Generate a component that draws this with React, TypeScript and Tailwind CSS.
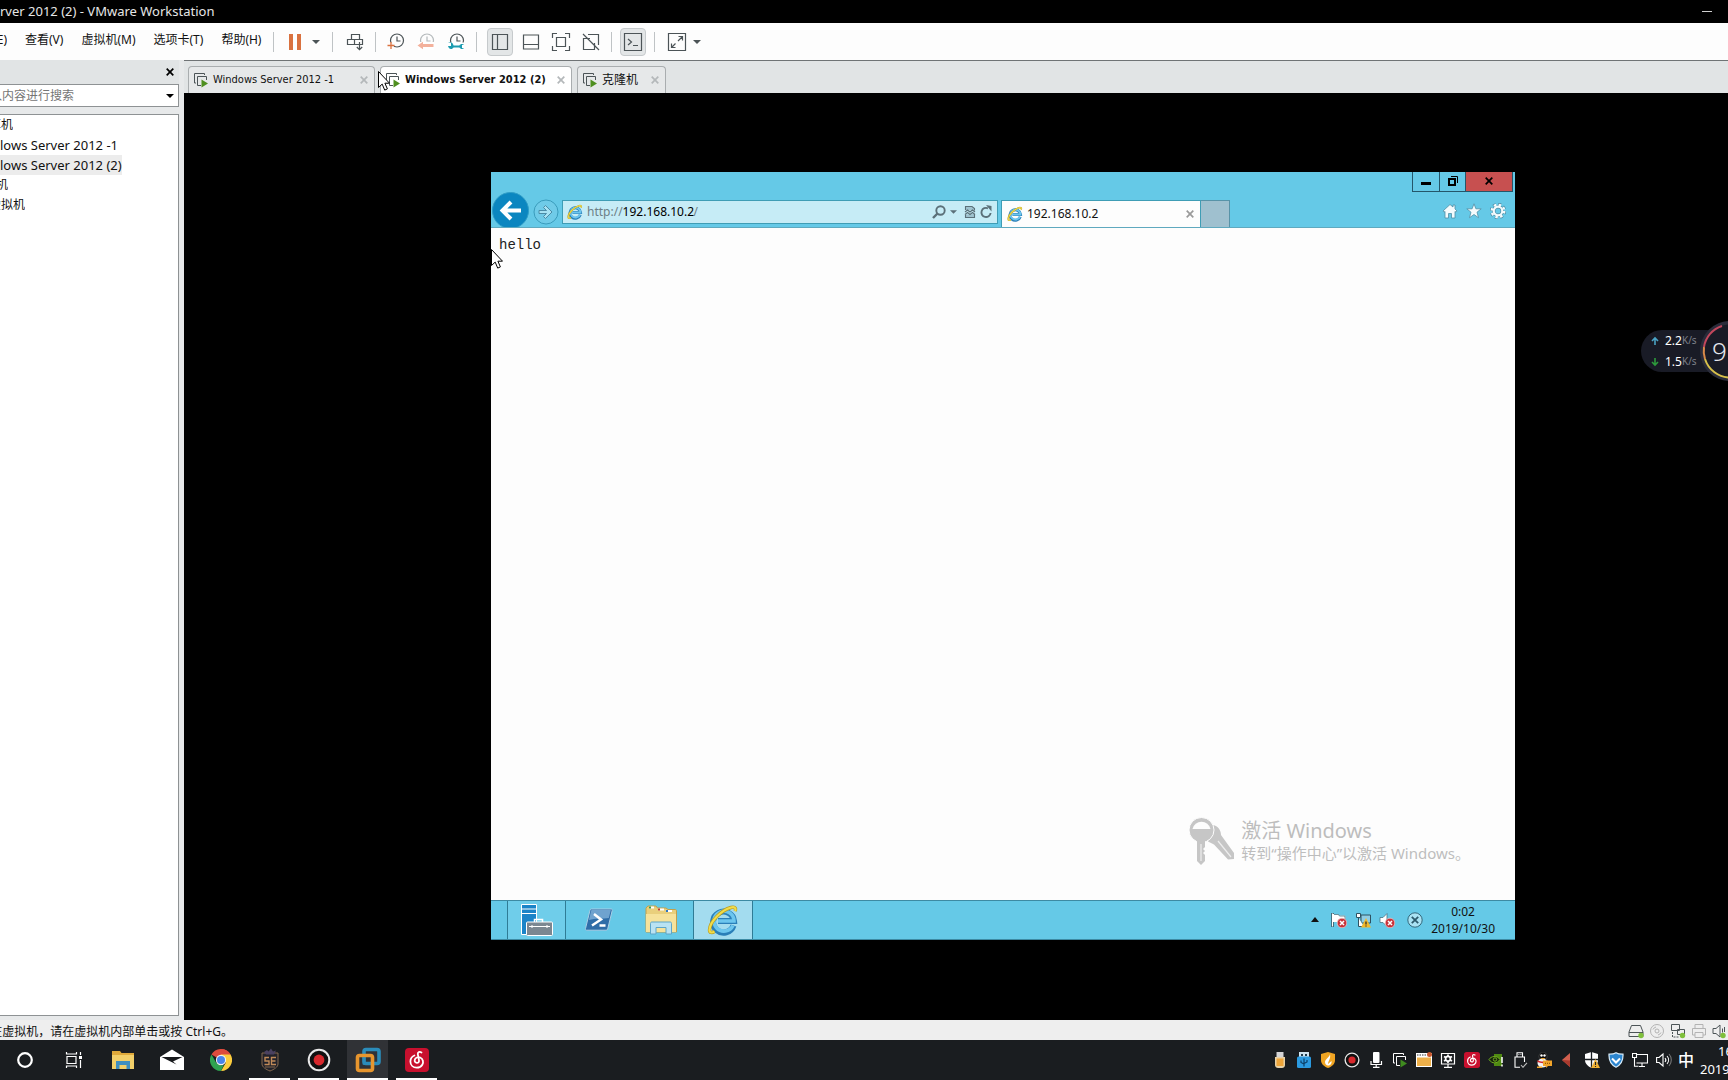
import type { ReactNode } from "react";

type IconProps = { className?: string };

const INK = "#4c5457";

function Glyph({ className = "size-5", box = 20, children }: { className?: string; box?: number; children: ReactNode }) {
  return (
    <svg className={`${className} shrink-0`} viewBox={`0 0 ${box} ${box}`} fill="none" aria-hidden="true">
      {children}
    </svg>
  );
}

/* ---------- Shared drawings ---------- */

function Cursor({ className = "" }: IconProps) {
  return (
    <svg className={className} width="12" height="20" viewBox="0 0 12 20" aria-hidden="true">
      <path d="M.5 .5v16l3.7-3.4 2.5 6 2.7-1.2-2.5-5.7h4.6z" fill="#fff" stroke="#000" />
    </svg>
  );
}

function Caret({ className = "" }: IconProps) {
  return (
    <svg className={`shrink-0 ${className}`} width="8" height="4" viewBox="0 0 8 4" aria-hidden="true">
      <path d="M0 0h8L4 4z" fill="currentColor" />
    </svg>
  );
}

function Cross({ className = "" }: IconProps) {
  return (
    <svg className={`shrink-0 ${className}`} width="8" height="8" viewBox="0 0 8 8" aria-hidden="true">
      <path d="M.7 .7l6.6 6.6M7.3 .7L.7 7.3" stroke="currentColor" strokeWidth="1.7" />
    </svg>
  );
}

function VmIcon({ className = "size-4", line = INK, play = "#4f8f1f" }: IconProps & { line?: string; play?: string }) {
  return (
    <Glyph className={className} box={16}>
      <path d="M3 11H1.5V1.5h10V3" stroke={line} />
      <path d="M8 13.5H4.500V4.500h9V8" stroke={line} />
      <path d="M8.500 7.500l6.500 4-6.500 4z" fill={play} />
    </Glyph>
  );
}

function IeIcon({ className = "size-4" }: IconProps) {
  return (
    <Glyph className={className} box={32}>
      <path d="M26.500 21.500A10.500 10.500 0 1 1 27 17H11" stroke="#2a7fb8" strokeWidth="6" />
      <path d="M26 21.500A10 10 0 1 1 27 17H11" stroke="#6cc6ee" strokeWidth="3.600" />
      <path d="M28 7c1.500-3-.5-4.500-4-3.500C15 6 3 17 2.500 26c0 3 2.500 3 5 1.500" stroke="#b99c1e" strokeWidth="3.400" />
      <path d="M28 7c1.500-3-.5-4.500-4-3.500C15 6 3 17 2.500 26c0 3 2.500 3 5 1.500" stroke="#f0dc4a" strokeWidth="2.200" />
    </Glyph>
  );
}

function NeteaseIcon({ className = "size-6" }: IconProps) {
  return (
    <Glyph className={className} box={24}>
      <rect width="24" height="24" rx="4" fill="#c8102e" />
      <path
        d="M16.500 4.500c-2-1.200-4-.4-3.700 1.600l1.200 6.200c.3 1.900-1 2.700-2.200 2.600-1.400-.1-2.300-1.300-2.100-2.800.4-2.600 3.400-3.500 5.400-2.600 3 1.400 3.700 4.600 2.200 7.200-1.300 2.300-3.400 3-5.600 3-3.600 0-6.300-2.600-6.300-6.200 0-2.900 1.600-5 4-6"
        stroke="#fff"
        strokeWidth="1.800"
        strokeLinecap="round"
      />
    </Glyph>
  );
}

function RecordIcon({ className = "size-6" }: IconProps) {
  return (
    <Glyph className={className} box={24}>
      <circle cx="12" cy="12" r="10.300" fill="#111" stroke="#e8e8e8" strokeWidth="2" />
      <circle cx="12" cy="12" r="5.400" fill="#d8282c" />
    </Glyph>
  );
}

/* ---------- VMware toolbar ---------- */

function ToolButton({ label, className, children }: { label: string; className: string; children: ReactNode }) {
  return (
    <button type="button" aria-label={label} className={`flex shrink-0 items-center justify-center ${className}`}>
      {children}
    </button>
  );
}

function Divider({ className = "" }: IconProps) {
  return <span className={`h-5 w-px shrink-0 bg-[#bfc3c5] ${className}`} />;
}

function ClockFace({ tone = INK }: { tone?: string }) {
  return (
    <>
      <circle cx="11" cy="8.500" r="6.500" stroke={tone} strokeWidth="1.200" />
      <path d="M11 4.500v4.500h3.500" stroke={tone} strokeWidth="1.200" />
    </>
  );
}

function Toolbar() {
  return (
    <div className="flex items-center">
      <Divider />
      <ToolButton label="暂停" className="ml-3 w-5">
        <Glyph box={20}>
          <path d="M3 2h4v16H3zM11 2h4v16h-4z" fill="#d9713f" />
        </Glyph>
      </ToolButton>
      <ToolButton label="电源选项" className="ml-1 w-3">
        <Caret className="text-[#4c5457]" />
      </ToolButton>
      <Divider className="ml-2.5" />
      <ToolButton label="发送 Ctrl+Alt+Del" className="ml-3 w-5">
        <Glyph>
          <path
            d="M6.500 2.500h8v5h-8zM2.500 7.500h7v5h-7zM9.500 7.500h8v5h-8zM14.500 10v7.500M11.800 15l2.700 2.700 2.700-2.700"
            stroke={INK}
            strokeWidth="1.200"
          />
        </Glyph>
      </ToolButton>
      <Divider className="ml-2.5" />
      <ToolButton label="拍摄快照" className="ml-2.5 w-5">
        <Glyph>
          <ClockFace />
          <path d="M5 10.500v6M2 13.500h6" stroke="#fff" strokeWidth="2.600" />
          <path d="M5 10v7M1.500 13.500h7" stroke="#d9713f" strokeWidth="1.300" />
        </Glyph>
      </ToolButton>
      <ToolButton label="恢复快照" className="ml-2.5 w-5">
        <Glyph>
          <ClockFace tone="#b5babc" />
          <path d="M2 10h16v8H2z" fill="#fff" />
          <path d="M1.500 13.500L7 9.800v2.200h10.500v3H7v2.200z" fill="#f3b19c" />
        </Glyph>
      </ToolButton>
      <ToolButton label="管理快照" className="ml-2.5 w-5">
        <Glyph>
          <ClockFace />
          <path d="M2 10.500h16V18H2z" fill="#fff" />
          <path
            d="M2 11h3v3H2c.5 2 1.500 3 3 3 1.200 0 2-.6 2.600-1.500h5.800c.6.900 1.400 1.500 2.600 1.500.8 0 1.500-.4 2-1h-2v-3h2c-.5-.7-1.200-1-2-1-1.200 0-2 .6-2.600 1.400H7.600C7 11.600 6.200 10.500 5 10.500c-1.200 0-2.200.1-3 .5z"
            fill="#1d9cb0"
          />
        </Glyph>
      </ToolButton>
      <Divider className="ml-2.5" />
      <ToolButton label="显示或隐藏库" className="ml-2.5 h-7 w-[26px] rounded-sm border border-[#c6cacc] bg-[#e3e6e7]">
        <Glyph>
          <path d="M2.500 2.500h15v15h-15zM7.500 2.500v15" stroke={INK} strokeWidth="1.200" />
        </Glyph>
      </ToolButton>
      <ToolButton label="缩略图栏" className="ml-1.5 w-6">
        <Glyph>
          <path d="M2.500 3h15v14h-15zM2.500 12.500h15" stroke={INK} strokeWidth="1.200" />
        </Glyph>
      </ToolButton>
      <ToolButton label="全屏模式" className="ml-1.5 w-6">
        <Glyph>
          <path
            d="M5.500 5.500h9v9h-9zM1.500 6V1.500H6M14 1.500h4.500V6M18.500 14v4.500H14M6 18.500H1.500V14"
            stroke={INK}
            strokeWidth="1.200"
          />
        </Glyph>
      </ToolButton>
      <ToolButton label="Unity 模式" className="ml-1.5 w-6">
        <Glyph>
          <path d="M7 2.500h10.500V13M9 6.500H2.500v11h11V11M2 2l16 16" stroke={INK} strokeWidth="1.200" />
        </Glyph>
      </ToolButton>
      <Divider className="ml-2" />
      <ToolButton label="控制台视图" className="ml-2 h-7 w-[26px] rounded-sm border border-[#c6cacc] bg-[#e3e6e7]">
        <Glyph>
          <path d="M1.500 1.500h17v17h-17zM5 7l3.500 3L5 13M10 13.500h5" stroke={INK} strokeWidth="1.200" />
        </Glyph>
      </ToolButton>
      <Divider className="ml-2" />
      <ToolButton label="拉伸客户机" className="ml-3 w-5">
        <Glyph>
          <path
            d="M1.500 1.500h17v17h-17zM5 15l3.500-3.500M11 9l4-4M11.500 4.500h4v4M4.500 11.500v4h4"
            stroke={INK}
            strokeWidth="1.200"
          />
        </Glyph>
      </ToolButton>
      <ToolButton label="拉伸选项" className="ml-1 w-3">
        <Caret className="text-[#4c5457]" />
      </ToolButton>
    </div>
  );
}

/* ---------- Library panel ---------- */

function LibraryPanel() {
  return (
    <aside className="flex w-[184px] shrink-0 flex-col bg-[#e7e9ea] pr-[5px] pb-1">
      <div className="flex h-[24px] shrink-0 items-center justify-end bg-[#e1e4e5] pr-1">
        <button type="button" aria-label="关闭库" className="p-px">
          <Cross className="text-black" />
        </button>
      </div>
      <div className="flex h-[23px] shrink-0 items-center overflow-hidden border-y border-r border-[#8e9294] bg-white pr-0.5">
        <input
          aria-label="搜索"
          placeholder="入内容进行搜索"
          className="-ml-2.5 h-5 w-0 flex-1 bg-transparent text-[12px] placeholder:text-[#757575] outline-none"
        />
        <button type="button" aria-label="搜索选项" className="p-0.5">
          <Caret className="text-black" />
        </button>
      </div>
      <ul className="mt-[7px] flex-1 border-y border-r border-[#8e9294] bg-white text-[12px] leading-5 whitespace-nowrap">
        <li className="flex w-[13px] justify-end overflow-hidden">算机</li>
        <li className="w-fit text-[13px]">lows Server 2012 -1</li>
        <li className="w-fit bg-[#ececec] text-[13px]">lows Server 2012 (2)</li>
        <li className="flex w-2 justify-end overflow-hidden">机</li>
        <li className="flex w-[25px] justify-end overflow-hidden">虚拟机</li>
      </ul>
    </aside>
  );
}

/* ---------- Guest tabs ---------- */

function GuestTab({ label, active = false, className }: { label: string; active?: boolean; className: string }) {
  return (
    <div
      className={`flex h-[27px] items-center rounded-t-sm border border-b-0 border-[#a9adaf] pr-1.5 pl-1 ${
        active ? "bg-white" : "bg-[#e6e8e9]"
      } ${className}`}
    >
      <button type="button" role="tab" aria-selected={active} className="flex flex-1 items-center gap-1 whitespace-nowrap">
        <VmIcon />
        {label}
      </button>
      <button type="button" aria-label={`关闭 ${label}`}>
        <Cross className="text-[#b4b8ba]" />
      </button>
    </div>
  );
}

/* ---------- Guest desktop ---------- */

function BrowserHeader() {
  return (
    <header className="flex h-14 shrink-0 justify-between border-b border-[#5fa9bf] bg-[#65c9e7]">
      <div className="flex items-end">
        <button type="button" aria-label="后退" className="ml-px h-[35px] overflow-hidden">
          <Glyph className="size-[37px]" box={37}>
            <circle cx="18.500" cy="18.500" r="18" fill="#0b86c0" stroke="#2f9cc6" />
            <path d="M29 18.500H11M19 10l-8.500 8.500L19 27" stroke="#fff" strokeWidth="4" />
          </Glyph>
        </button>
        <button type="button" aria-label="前进" className="mb-0.5 ml-1">
          <Glyph className="size-[26px]" box={26}>
            <circle cx="13" cy="13" r="12" fill="#6fcbe8" stroke="#3a9cbc" />
            <path d="M6 11.500h7.500L10.500 8.500l2-2L19 13l-6.500 6.500-2-2 3-3H6z" fill="#a6e2f3" stroke="#4b8ba6" strokeWidth="1" />
          </Glyph>
        </button>
        <div className="mb-[3px] ml-[3px] flex h-6 w-[436px] items-center border border-[#3f9db5] bg-[#c6ecf6] px-1 text-[12px] text-[#6d7f86]">
          <IeIcon />
          <span className="ml-1">http://</span>
          <input aria-label="地址" defaultValue="192.168.10.2" className="w-[71px] bg-transparent text-black outline-none" />
          <span>/</span>
          <span className="flex-1" />
          <button type="button" aria-label="搜索">
            <Glyph className="size-[14px]" box={14}>
              <circle cx="8.500" cy="5.500" r="4.200" stroke="#5b7079" strokeWidth="1.900" />
              <path d="M5.500 8.500L1 13" stroke="#5b7079" strokeWidth="2.400" />
            </Glyph>
          </button>
          <button type="button" aria-label="地址选项" className="ml-1">
            <Caret className="w-[7px] text-[#5b7079]" />
          </button>
          <button type="button" aria-label="兼容性视图" className="ml-1.5">
            <Glyph className="size-[14px]" box={14}>
              <path d="M2.500 5V1.500h6.500l2.500 2V5.500M2.500 9.500v3h9V9" fill="#9fc3cf" stroke="#5b7079" strokeWidth="1.100" />
              <path d="M2 7l2.500-2 2.500 2 2.500-2L12 7M2 9.500l2.500-2 2.500 2 2.500-2L12 9.500" stroke="#5b7079" strokeWidth="1.100" />
            </Glyph>
          </button>
          <button type="button" aria-label="刷新" className="ml-0.5">
            <Glyph className="size-[14px]" box={14}>
              <path d="M9 3.300A4.600 4.600 0 1 0 11.600 8" stroke="#5b7079" strokeWidth="1.900" />
              <path d="M7 0l5.500 1v5.500z" fill="#5b7079" />
            </Glyph>
          </button>
        </div>
        <div className="ml-[3px] flex h-[27px] w-[200px] items-center border border-b-0 border-[#3f9db5] bg-[#fdfdfd] pr-1.5 pl-[5px] text-[12px]">
          <IeIcon />
          <span className="ml-1 flex-1">192.168.10.2</span>
          <button type="button" aria-label="关闭选项卡">
            <Cross className="text-[#9a9a9a]" />
          </button>
        </div>
        <button
          type="button"
          aria-label="新建选项卡"
          className="h-[27px] w-[29px] border border-b-0 border-l-0 border-[#5793a8] bg-[#9fc0cf]"
        />
      </div>
      <div className="flex flex-col items-end justify-between pr-0.5">
        <div className="flex h-5 border border-t-0 border-[#24566a]">
          <button type="button" aria-label="最小化" className="flex w-[27px] items-center justify-center border-r border-[#24566a]">
            <span className="mt-1 h-[3px] w-2.5 bg-black" />
          </button>
          <button type="button" aria-label="还原" className="flex w-[26px] items-center justify-center border-r border-[#24566a]">
            <Glyph className="size-[10px]" box={10}>
              <path d="M1 3h6v6H1z" stroke="#000" strokeWidth="2" />
              <path d="M3 .5h6.500V7" stroke="#000" />
            </Glyph>
          </button>
          <button type="button" aria-label="关闭" className="flex w-[46px] items-center justify-center bg-[#c75050]">
            <Cross className="text-black" />
          </button>
        </div>
        <div className="mb-2 flex gap-2 pr-[7px]">
          <button type="button" aria-label="主页">
            <Glyph className="size-4" box={16}>
              <path
                d="M1 8l7-6.500L11 4V2h2v4l2 2-1 1.200-1-.8V15h-3.500v-4.500h-3V15H3V8.400L2 9.200z"
                fill="#f4fbfd"
                stroke="#4f8fa6"
                strokeWidth=".8"
              />
            </Glyph>
          </button>
          <button type="button" aria-label="收藏夹">
            <Glyph className="size-4" box={16}>
              <path
                d="M8 .8l1.900 5h5.300l-4.200 3.400 1.500 5.500L8 11.500l-4.500 3.200L5 9.200.8 5.800h5.300z"
                fill="#f4fbfd"
                stroke="#4f8fa6"
                strokeWidth=".8"
              />
            </Glyph>
          </button>
          <button type="button" aria-label="工具">
            <Glyph className="size-4" box={16}>
              <circle cx="8" cy="8" r="6.600" stroke="#4f8fa6" strokeWidth="3.200" strokeDasharray="3 2.180" />
              <circle cx="8" cy="8" r="4.300" stroke="#4f8fa6" strokeWidth="3.600" />
              <circle cx="8" cy="8" r="6.200" stroke="#f4fbfd" strokeWidth="2.400" strokeDasharray="2.400 2.470" />
              <circle cx="8" cy="8" r="4.300" stroke="#f4fbfd" strokeWidth="2.200" />
            </Glyph>
          </button>
        </div>
      </div>
    </header>
  );
}

function ActivationNotice() {
  return (
    <div className="flex items-start gap-1.5 pr-[45px] pb-[35px] text-[#bdbdbd]">
      <svg className="shrink-0" width="46" height="48" viewBox="0 0 46 48" aria-hidden="true">
        <path d="M24 8c5 1 8 5 8 10l13 18v6l-6 .5-14-15-6-3z" fill="#c6c6c6" />
        <path d="M29 24l13 16" stroke="#eee" strokeWidth="1.200" />
        <circle cx="12.500" cy="13" r="12.500" fill="#c6c6c6" stroke="#fdfdfd" />
        <path d="M3.500 12a9.200 9.200 0 0 1 18 0z" fill="#fdfdfd" />
        <path d="M8 24h8v6l-2 2 2 2-2 2 2 2v6l-4 4-4-4z" fill="#c6c6c6" />
        <path d="M12 27v17" stroke="#eee" strokeWidth="1.200" />
      </svg>
      <div>
        <p className="text-[20px] leading-7">激活 Windows</p>
        <p className="text-[15px] leading-4">转到“操作中心”以激活 Windows。</p>
      </div>
    </div>
  );
}

function RedBadge() {
  return (
    <>
      <circle cx="11" cy="11" r="4.800" fill="#c8323a" stroke="#f0d0d0" strokeWidth=".7" />
      <path d="M9 9l4 4M13 9l-4 4" stroke="#fff" strokeWidth="1.500" />
    </>
  );
}

function GuestTaskbar() {
  return (
    <footer className="flex h-10 shrink-0 justify-between border-y border-[#3d8aa3] bg-[#65c9e7]">
      <nav className="flex gap-[3px] pl-4">
        <button
          type="button"
          aria-label="服务器管理器"
          className="flex w-[59px] items-center justify-center border-x border-[#2f7c96] bg-[#6fcdea]"
        >
          <Glyph className="size-8" box={32}>
            <path d="M.5 .5h15v30H.5z" fill="#1b84c8" stroke="#fff" />
            <path d="M.5 5h15M.5 9.500h15" stroke="#fff" />
            <path d="M13.500 18v-2.500h8V18" stroke="#fff" strokeWidth="1.500" />
            <rect x="5.500" y="18" width="26" height="13.500" rx="1" fill="#7b8791" stroke="#fff" />
            <path d="M8 22.500h21M11 21v3M26 21v3" stroke="#fff" />
          </Glyph>
        </button>
        <button type="button" aria-label="PowerShell" className="flex w-[59px] items-center justify-center">
          <Glyph className="size-7" box={28}>
            <path
              d="M6.500 3h19.500c1 0 1.500.6 1.200 1.600l-4.500 18.400c-.2.800-.8 1.200-1.600 1.200H1.600c-.9 0-1.400-.6-1.100-1.600L5 4.200C5.200 3.400 5.700 3 6.500 3z"
              fill="#2f6da8"
              stroke="#a9cde4"
            />
            <path d="M6.500 4h19.300l-2 8C18 13 10 12 4 14l2-9z" fill="#6fa3cf" />
            <path d="M9 8l7 5.500L7 19.500M14.500 19.500h6" stroke="#fff" strokeWidth="2.500" />
          </Glyph>
        </button>
        <button type="button" aria-label="文件资源管理器" className="flex w-[59px] items-center justify-center">
          <Glyph className="size-8" box={32}>
            <path d="M1 4l2-2h8l1.500 2H21l2 1.500h7c1 0 1.500.5 1.500 1.500V28H1z" fill="#e9cf7c" stroke="#c1a04b" />
            <path d="M4 3.500h5M13 5.500h6M21 7h6" stroke="#fff" strokeWidth="2" />
            <path d="M4 3.500h2" stroke="#3d9b4b" strokeWidth="2" />
            <path d="M13 5.500h2" stroke="#c23b2f" strokeWidth="2" />
            <path d="M21 7h2" stroke="#2f77c2" strokeWidth="2" />
            <path d="M1 10h30v18H1z" fill="#f6e29b" />
            <path d="M5.500 30V19.500c0-1 .5-1.500 1.500-1.500h18c1 0 1.500.5 1.500 1.500V30H21v-6.500H11V30z" fill="#b9e2f3" stroke="#5ea5c7" />
          </Glyph>
        </button>
        <button
          type="button"
          aria-label="Internet Explorer"
          className="flex w-[60px] items-center justify-center border-x border-[#2f7c96] bg-[#a3dcef]"
        >
          <IeIcon className="size-8" />
        </button>
      </nav>
      <div className="flex items-center pr-5">
        <svg width="8" height="5" viewBox="0 0 8 5" aria-hidden="true">
          <path d="M0 5l4-5 4 5z" fill="#111" />
        </svg>
        <Glyph className="ml-3 size-4" box={16}>
          <path d="M1.500 1v14" stroke="#3c5a66" strokeWidth="2.600" />
          <path d="M1.500 1.500v13M2 2.500h5l1 1.500h6v7H8L7 9.500H2z" fill="#fff" stroke="#fff" strokeWidth="1" />
          <path d="M3 2.500h4.500l1 1.500H14v6" stroke="#4a7484" strokeWidth=".8" />
          <RedBadge />
        </Glyph>
        <Glyph className="ml-2 size-4" box={16}>
          <path d="M6 3h9.500v8H6z" fill="#8fcde3" stroke="#2f5261" />
          <path d="M1.500 1.500h4v4h-4zM3.500 6v8.500H9" fill="#fff" stroke="#2f5261" />
          <path d="M11 6l5 9.500H6z" fill="#f2b92c" />
          <path d="M11 9.500v3M11 13.500v1" stroke="#222" strokeWidth="1.200" />
        </Glyph>
        <Glyph className="ml-2 size-4" box={16}>
          <path d="M1 5.500h3L8 1.500v13l-4-4H1z" fill="#fff" stroke="#4a7484" strokeWidth=".8" />
          <RedBadge />
        </Glyph>
        <Glyph className="ml-3 size-4" box={16}>
          <circle cx="8" cy="8" r="7.200" fill="#a9e2f3" stroke="#34687c" />
          <path d="M4.800 4.800l6.400 6.400M11.200 4.800l-6.400 6.400" stroke="#2c5a6c" strokeWidth="1.800" />
        </Glyph>
        <time className="ml-2 text-center text-[12px] leading-[17px] text-[#111]">
          0:02
          <br />
          2019/10/30
        </time>
      </div>
    </footer>
  );
}

function GuestDesktop() {
  return (
    <section className="relative flex h-[768px] w-[1024px] shrink-0 flex-col bg-[#fdfdfd]">
      <BrowserHeader />
      <main className="flex flex-1 flex-col items-end justify-between">
        <pre className="self-stretch px-2 pt-2 font-['Liberation_Mono',monospace] text-[14px] leading-[18px] text-[#222]">hello</pre>
        <ActivationNotice />
      </main>
      <GuestTaskbar />
      <Cursor className="absolute top-[77px] left-0" />
    </section>
  );
}

/* ---------- Status bar ---------- */

function StatusBar() {
  return (
    <div className="flex h-5 shrink-0 items-center justify-between overflow-hidden bg-[#eeeeee]">
      <p className="flex w-[233px] justify-end overflow-hidden pt-1 text-[12px] whitespace-nowrap">
        在虚拟机，请在虚拟机内部单击或按 Ctrl+G。
      </p>
      <div className="flex gap-[5px] pt-0.5">
        <Glyph className="size-4" box={16}>
          <path d="M1 9l2.500-6.500h9L15 9v4.500H1zM1 9.500h14" stroke={INK} />
          <circle cx="13" cy="12.500" r="2.700" fill="#7fbf3b" />
        </Glyph>
        <Glyph className="size-4" box={16}>
          <circle cx="8" cy="8" r="6.500" stroke="#b3b3b3" />
          <circle cx="8" cy="8" r="2" stroke="#b3b3b3" />
          <path d="M4 6.500A4.500 4.500 0 0 1 7 4M12 9.500A4.500 4.500 0 0 1 9 12" stroke="#b3b3b3" />
        </Glyph>
        <Glyph className="size-4" box={16}>
          <path d="M1.500 1.500h8v6h-8zM7.500 6.500h7v5h-7z" stroke={INK} />
          <path d="M2.500 9v5h7" stroke={INK} strokeDasharray="2 1" />
          <circle cx="12.500" cy="12.500" r="2.700" fill="#7fbf3b" />
        </Glyph>
        <Glyph className="size-4" box={16}>
          <path d="M4 5.500v-4h8v4M4 12H1.500V5.500h13V12H12M4 9.500h8v5H4z" stroke="#b3b3b3" />
        </Glyph>
        <Glyph className="size-4" box={16}>
          <path d="M1 5.500h3L8 2v12l-4-3.500H1zM10.500 5.500v4M12.500 4v5" stroke={INK} />
          <circle cx="11" cy="12.500" r="2.700" fill="#7fbf3b" />
        </Glyph>
      </div>
    </div>
  );
}

/* ---------- Host taskbar ---------- */

const apps: { name: string; state: string; icon: ReactNode }[] = [
  {
    name: "Cortana",
    state: "border-transparent",
    icon: (
      <Glyph className="size-[18px]" box={18}>
        <circle cx="9" cy="9" r="6.800" stroke="#fff" strokeWidth="2.200" />
      </Glyph>
    ),
  },
  {
    name: "任务视图",
    state: "border-transparent",
    icon: (
      <Glyph className="size-[18px]" box={18}>
        <path d="M2 5.500h9v7H2zM1.500 1v2h10V1M1.500 17v-2h10v2M15.500 1v3M15.500 9v8" stroke="#fff" strokeWidth="1.200" />
        <path d="M14 5h3v3h-3z" fill="#fff" />
      </Glyph>
    ),
  },
  {
    name: "文件资源管理器",
    state: "border-transparent",
    icon: (
      <Glyph className="size-[22px]" box={22}>
        <path d="M0 2h8l1.500 2H22v16H0z" fill="#dfa93a" />
        <path d="M0 6h22v14H0z" fill="#f2cf69" />
        <path d="M4 20v-8h14v8h-3.500v-4h-7v4z" fill="#3f8fc0" />
      </Glyph>
    ),
  },
  {
    name: "邮件",
    state: "border-transparent",
    icon: (
      <Glyph className="size-6" box={24}>
        <path d="M0 9L12 1.500 24 9v13H0z" fill="#fff" />
        <path d="M1.500 9h21L13 13.500l3.500 3z" fill="#17191c" />
      </Glyph>
    ),
  },
  {
    name: "Chrome",
    state: "border-transparent",
    icon: (
      <Glyph className="size-[22px]" box={24}>
        <path d="M12 12L1.600 6A12 12 0 0 1 22.400 6z" fill="#dd4b3e" />
        <path d="M12 12V0a12 12 0 0 1 10.400 6H12z" fill="#dd4b3e" />
        <path d="M12 6h10.400A12 12 0 0 1 12 24l5.200-9z" fill="#fccd3e" />
        <path d="M1.600 6l5.200 9 5.200 3 3-.5L12 24A12 12 0 0 1 1.600 6z" fill="#2fa351" />
        <circle cx="12" cy="12" r="5.600" fill="#f4f4f4" />
        <circle cx="12" cy="12" r="4.400" fill="#4a84ec" />
      </Glyph>
    ),
  },
  {
    name: "SE",
    state: "border-white",
    icon: (
      <Glyph className="size-6" box={24}>
        <path d="M4 5h16v11c0 3-4 5.500-8 7-4-1.500-8-4-8-7z" fill="#22222a" stroke="#84684f" />
        <path d="M6 4l3-2 1.500 1.500L13 .5l2 3 3-1-2 4H8z" fill="#4a4160" />
        <path d="M11 9.500H7V13h4v3.500H6.500M18 9.500h-4.500v7H18M13.500 13h4" stroke="#c08a58" strokeWidth="1.400" />
        <path d="M7 19h10" stroke="#84684f" />
      </Glyph>
    ),
  },
  { name: "录屏", state: "border-white", icon: <RecordIcon className="size-6" /> },
  {
    name: "VMware Workstation",
    state: "border-white bg-[#303236]",
    icon: (
      <Glyph className="size-[26px]" box={26}>
        <rect x="9" y="2.500" width="15" height="14" rx="2" stroke="#2b8cba" strokeWidth="3.600" />
        <rect x="2.500" y="8.500" width="15" height="15" rx="2" stroke="#e8962e" strokeWidth="3.600" />
        <path d="M9 10.500v6h6" stroke="#2b8cba" strokeWidth="2.600" />
      </Glyph>
    ),
  },
  { name: "网易云音乐", state: "border-white", icon: <NeteaseIcon /> },
];

const tray: { name: string; icon: ReactNode }[] = [
  {
    name: "U盘",
    icon: (
      <Glyph className="size-4" box={16}>
        <path d="M4.500 0h7v5h-7z" fill="#d5d5d5" />
        <path d="M3 5h10v8c0 2-1.500 3-3 3H6c-1.500 0-3-1-3-3z" fill="#e8d2a8" />
        <path d="M4.500 6.500h7V14h-7z" fill="#eea53a" />
      </Glyph>
    ),
  },
  {
    name: "USB 助手",
    icon: (
      <Glyph className="size-4" box={16}>
        <path d="M3 0h10v6H3z" fill="#cfe3ee" />
        <path d="M5 2h2v2H5zM9 2h2v2H9z" fill="#1f3a4a" />
        <rect x="1" y="4.500" width="14" height="11.500" rx="1.500" fill="#2b9ae0" />
        <path d="M8 6.500v8M5 8.500v2l3 1.500M11 8v2l-3 1.500" stroke="#0d3f66" strokeWidth="1.200" />
      </Glyph>
    ),
  },
  {
    name: "火绒",
    icon: (
      <Glyph className="size-4" box={16}>
        <path d="M8 0l7 2v6c0 4-3 6.500-7 8-4-1.500-7-4-7-8V2z" fill="#f0a523" />
        <path d="M10 2c0 3-5 5-5 8 0 2 1.500 3.500 3 3.500 2.500 0 4-2 3.500-4.500L8 12c0-3 3-5 2-10z" fill="#fff" />
      </Glyph>
    ),
  },
  { name: "录屏", icon: <RecordIcon className="size-4" /> },
  {
    name: "麦克风",
    icon: (
      <Glyph className="size-4" box={16}>
        <rect x="5" y="0" width="6.500" height="11" rx="1" fill="#fff" />
        <path d="M3 9v3.500h10.500V9M8.200 12.500V15M5 15.300h6.500" stroke="#fff" strokeWidth="1.200" />
      </Glyph>
    ),
  },
  { name: "VMware", icon: <VmIcon line="#fff" play="#3f8b1f" /> },
  {
    name: "窗口",
    icon: (
      <Glyph className="size-4" box={16}>
        <path d="M0 1h16v14H0z" fill="#fff" />
        <path d="M1 5.500h14V14H1z" fill="#eeb04a" />
        <path d="M1 3h9" stroke="#333" strokeDasharray="1.500 1" />
        <circle cx="13.500" cy="2.500" r="2.500" fill="#c9582e" />
      </Glyph>
    ),
  },
  {
    name: "显示设置",
    icon: (
      <Glyph className="size-4" box={16}>
        <path d="M1.500 1.500h13v10.500h-13zM8 12v3M4 15.300h8" stroke="#fff" strokeWidth="1.200" />
        <circle cx="8" cy="6.800" r="2.400" stroke="#fff" strokeWidth="1.700" />
        <path d="M8 2.500v2M8 9v2M4 4.500l1.800 1M10.200 8l1.800 1M12 4.500l-1.800 1M5.800 8L4 9" stroke="#fff" strokeWidth="1.700" />
      </Glyph>
    ),
  },
  { name: "网易云音乐", icon: <NeteaseIcon className="size-4" /> },
  {
    name: "NVIDIA",
    icon: (
      <Glyph className="size-4" box={16}>
        <path d="M6 2h8v12H6z" fill="#4f8a12" />
        <path d="M1 7.500C3 4 9 3 12 7.500 9 12 4 12 1 7.500z" fill="#16240c" stroke="#72b01e" />
        <circle cx="7" cy="7.500" r="1.700" stroke="#72b01e" />
        <path d="M14 5v6M14 12.500v2" stroke="#fff" strokeWidth="1.500" />
      </Glyph>
    ),
  },
  {
    name: "安全删除硬件",
    icon: (
      <Glyph className="size-4" box={16}>
        <path d="M5 5V.7h5.500V5M8 15.300H3V5h9.500v5M6.500 2.500h.8M8.500 2.500h.8" stroke="#fff" strokeWidth="1.100" />
        <path d="M9 13l2 2.300 4-4.500" stroke="#bbb" strokeWidth="1.100" />
      </Glyph>
    ),
  },
  {
    name: "QQ",
    icon: (
      <Glyph className="size-4" box={16}>
        <ellipse cx="7" cy="4.500" rx="4" ry="4.500" fill="#0a0a0a" stroke="#666" strokeWidth=".5" />
        <ellipse cx="6.500" cy="11" rx="5" ry="4.500" fill="#f2f2f2" />
        <path d="M1.500 8c3 2 8 2 10.500 0v2c-3 1.500-7.500 1.500-10.500 0z" fill="#d5282a" />
        <circle cx="5.500" cy="3.500" r="1.200" fill="#fff" />
        <circle cx="8.500" cy="3.500" r="1.200" fill="#fff" />
        <path d="M4 6h6l-3 1.500zM1 14.500h5V16H1z" fill="#f3a52a" />
        <path d="M7 8.500h9V14h-4l-2 2v-2H7z" fill="#f3a52a" />
        <path d="M9 11.300h5" stroke="#7b4a05" strokeDasharray="1 1" />
      </Glyph>
    ),
  },
  {
    name: "音频",
    icon: (
      <Glyph className="size-4" box={16}>
        <path d="M2 8l8-7v14z" fill="#d2604f" />
        <path d="M2 8l8 .5V15z" fill="#a83a2e" />
      </Glyph>
    ),
  },
  {
    name: "Windows 安全",
    icon: (
      <Glyph className="size-4" box={16}>
        <path d="M7.500 0L14 2v6c0 3.500-2.500 6-6.500 8C3.500 14 1 11.500 1 8V2z" fill="#fff" />
        <path d="M7.500 0v16M1 7.500h13" stroke="#1a1f23" strokeWidth="1.300" />
        <path d="M11.500 7l4.500 9H7z" fill="#efb034" />
        <path d="M11.500 10v3M11.500 14v1" stroke="#222" strokeWidth="1.100" />
      </Glyph>
    ),
  },
  {
    name: "电脑管家",
    icon: (
      <Glyph className="size-4" box={16}>
        <path
          d="M8 .8C10 2 12.500 2.300 15 2.200c.3 6-1.500 10.500-7 13C2.500 12.700.7 8.200 1 2.200 3.500 2.300 6 2 8 .8z"
          fill="#2c86d0"
          stroke="#d9ecf8"
          strokeWidth="1.200"
        />
        <path d="M4 6.500l4 4 4-4" stroke="#fff" strokeWidth="2" />
      </Glyph>
    ),
  },
  {
    name: "网络",
    icon: (
      <Glyph className="size-4" box={16}>
        <path d="M4.500 2.500h11v8.500h-11M0.500 1.500h4v4h-4zM2.500 5.500v8.800h4M10 11v3M7 14.500h6" stroke="#fff" strokeWidth="1.100" />
      </Glyph>
    ),
  },
  {
    name: "音量",
    icon: (
      <Glyph className="size-4" box={16}>
        <path d="M.6 5.500h2.500L7 2v12l-3.900-3.500H.6z" stroke="#fff" strokeWidth="1.100" />
        <path d="M9 6a3 3 0 0 1 0 4M11 4a6 6 0 0 1 0 8" stroke="#fff" strokeWidth="1.100" />
        <path d="M13 2a9 9 0 0 1 0 12" stroke="#777" strokeWidth="1.100" />
      </Glyph>
    ),
  },
];

function HostTaskbar() {
  return (
    <footer className="flex h-10 shrink-0 justify-between overflow-hidden bg-[#1a1d20] text-white">
      <nav className="flex">
        {apps.map((app) => (
          <button key={app.name} type="button" aria-label={app.name} className="flex w-[49px] justify-center px-1">
            <span className={`flex h-10 flex-1 items-center justify-center border-b-2 pt-0.5 ${app.state}`}>{app.icon}</span>
          </button>
        ))}
      </nav>
      <div className="flex">
        {tray.map((item) => (
          <button key={item.name} type="button" aria-label={item.name} className="flex w-6 items-center justify-center">
            {item.icon}
          </button>
        ))}
        <button type="button" aria-label="输入法" className="w-5 text-[16px] font-medium">
          中
        </button>
        <time className="ml-1 w-7 overflow-hidden pt-0.5 text-[13px] leading-[18px]">
          <span className="block pl-[18px]">16</span>
          <span className="block">2019</span>
        </time>
      </div>
    </footer>
  );
}

/* ---------- Floating network meter ---------- */

function NetMeter() {
  return (
    <div className="absolute top-[321px] right-0 flex h-[60px] w-[87px] items-center overflow-hidden">
      <div className="h-[42px] w-full shrink-0 rounded-l-full bg-[#191b26] pl-2.5 text-[12px] leading-[21px] text-white">
        {[
          { speed: "2.2", tone: "#4aa3c4", arrow: "M4 9V2M1 5l3-3 3 3" },
          { speed: "1.5", tone: "#2d9a3c", arrow: "M4 1v7M1 5l3 3 3-3" },
        ].map((row) => (
          <p key={row.speed} className="flex items-center">
            <svg className="mr-1.5" width="8" height="10" viewBox="0 0 8 10" fill="none" aria-hidden="true">
              <path d={row.arrow} stroke={row.tone} strokeWidth="1.600" />
            </svg>
            {row.speed}
            <span className="text-[10px] text-[#7d808a]">K/s</span>
          </p>
        ))}
      </div>
      <div className="-ml-7 flex size-[60px] shrink-0 items-center rounded-full bg-[#2a2c3a]">
        <svg className="-mr-[60px] size-[60px] shrink-0" viewBox="0 0 60 60" fill="none" aria-hidden="true">
          <circle cx="30" cy="30" r="26.500" fill="#191b26" />
          <path d="M4 26A26.500 26.500 0 0 1 22 5" stroke="#c2475c" strokeWidth="2" />
          <path d="M5 38A26.500 26.500 0 0 1 4 26" stroke="#d98a4a" strokeWidth="2" />
          <path d="M30 56.500A26.500 26.500 0 0 1 5 38" stroke="#d8c04a" strokeWidth="2" />
        </svg>
        <span className="relative pl-3 text-[26px] font-light text-[#e4e6ec]">9</span>
      </div>
    </div>
  );
}

export default function App() {
  return (
    <div className="relative flex h-screen flex-col overflow-hidden bg-black font-['Noto_Sans','Noto_Sans_CJK_SC',sans-serif] text-[#111]">
      <header className="flex h-[23px] shrink-0 items-center justify-between text-[13px] text-[#e6e6e6]">
        <h1 className="whitespace-nowrap">rver 2012 (2) - VMware Workstation</h1>
        <button type="button" aria-label="最小化" className="flex h-full items-center px-4">
          <span className="h-px w-2.5 bg-[#d0d0d0]" />
        </button>
      </header>

      <div className="flex h-[37px] shrink-0 items-center overflow-hidden bg-[#fdfdfd]">
        <nav className="flex w-[273px] shrink-0 gap-[18px] pb-[3px] text-[12px] whitespace-nowrap">
          <button type="button" className="flex w-[7px] justify-end overflow-hidden">
            E)
          </button>
          <button type="button">查看(V)</button>
          <button type="button">虚拟机(M)</button>
          <button type="button">选项卡(T)</button>
          <button type="button">帮助(H)</button>
        </nav>
        <Toolbar />
      </div>

      <div className="flex min-h-0 flex-1">
        <LibraryPanel />
        <div className="flex min-w-0 flex-1 flex-col border-t border-[#6f7375]">
          <div
            role="tablist"
            className="flex h-8 shrink-0 items-end gap-[5px] bg-[#e1e4e5] pl-1 font-['DejaVu_Sans_Condensed','Noto_Sans','Noto_Sans_CJK_SC',sans-serif] text-[11px]"
          >
            <GuestTab label="Windows Server 2012 -1" className="w-[187px]" />
            <GuestTab label="Windows Server 2012 (2)" active className="w-[192px] font-bold" />
            <GuestTab label="克隆机" className="w-[89px] text-[12px]" />
          </div>
          <div className="flex flex-1 items-center bg-black pb-0.5 pl-[307px]">
            <GuestDesktop />
          </div>
        </div>
      </div>

      <StatusBar />
      <HostTaskbar />
      <NetMeter />
      <Cursor className="absolute top-[71px] left-[378px]" />
    </div>
  );
}
